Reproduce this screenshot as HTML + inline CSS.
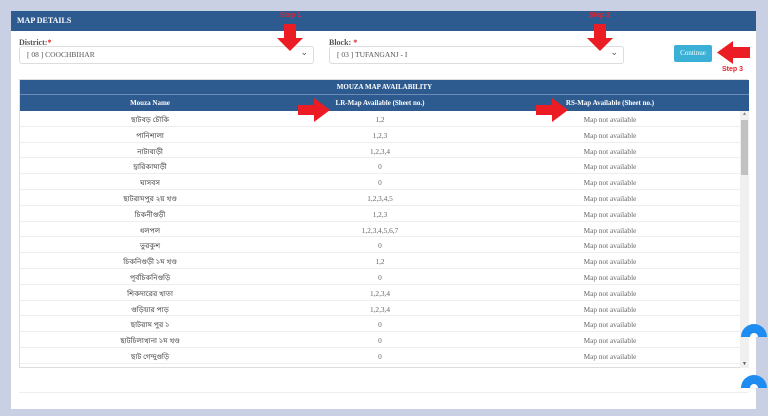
<!DOCTYPE html>
<html><head><meta charset="utf-8"><style>
*{margin:0;padding:0;box-sizing:border-box}
body{width:768px;height:416px;background:#c9d0e4;font-family:"Liberation Serif",serif;position:relative;overflow:hidden}
.panel{position:absolute;left:11px;top:11px;width:745px;height:398px;background:#fff}
.hdr{position:absolute;left:0;top:0;width:745px;height:20px;background:#2e5b8f;color:#fff;font-weight:bold;font-size:8px;line-height:20px;padding-left:6px}
.lbl{position:absolute;font-size:8px;font-weight:bold;color:#555}
.lbl b{color:#e02020}
.sel{position:absolute;height:18px;border:1px solid #ddd;border-radius:3px;font-size:7.5px;color:#555;line-height:16px;padding-left:7px}
.sel:after{content:"⌄";position:absolute;right:5px;top:-3px;font-size:9px;color:#555}
.btn{position:absolute;left:663px;top:34px;width:38px;height:17px;background:#3ab0d6;border-radius:2px;color:#fff;font-size:7px;text-align:center;line-height:17px}
.step{position:absolute;color:#e8202a;font-size:7px;font-weight:bold;font-family:"Liberation Sans",sans-serif}
.t{position:absolute;left:8px;top:68px;width:729px;height:289px;border:1px solid #ddd}
.th1{position:absolute;left:0;top:0;width:729px;height:15px;background:#2e5b8f;color:#fff;font-weight:bold;font-size:7px;text-align:center;line-height:15px;border-bottom:1px solid #6d8bb5}
.th2{position:absolute;left:0;top:15px;width:729px;height:16px;background:#2e5b8f;color:#fff;font-weight:bold;font-size:7px;line-height:16px}
.c{position:absolute;text-align:center}
.c1{left:0;width:260px}.c2{left:260px;width:200px}.c3{left:460px;width:260px}
.row{position:absolute;left:0;width:720px;height:15.8px;border-bottom:1px solid #eee;font-size:7.3px;line-height:17px;color:#666}
.row .c1{font-family:"Liberation Serif","Noto Sans Bengali","Lohit Bengali",serif;color:#555}
.sb{position:absolute;left:720px;top:31px;width:9px;height:257px;background:#f0f0f0}
.thumb{position:absolute;left:1px;top:9px;width:7px;height:55px;background:#c1c1c1}
.half{position:absolute;width:26px;height:13px;background:#1e8cf0;border-radius:13px 13px 0 0}
.half:after{content:"";position:absolute;left:9px;top:9px;width:8px;height:4px;background:#fff;border-radius:4px 4px 0 0}
</style></head><body>
<div class="panel">
<div class="hdr">MAP DETAILS</div>
<div class="lbl" style="left:8px;top:27px">District:<b>*</b></div>
<div class="sel" style="left:8px;top:35px;width:295px">[ 08 ] COOCHBIHAR</div>
<div class="lbl" style="left:318px;top:27px">Block: <b>*</b></div>
<div class="sel" style="left:318px;top:35px;width:295px">[ 03 ] TUFANGANJ - I</div>
<div class="btn">Continue</div>
<div class="t">
<div class="th1">MOUZA MAP AVAILABILITY</div>
<div class="th2"><div class="c c1">Mouza Name</div><div class="c c2">LR-Map Available (Sheet no.)</div><div class="c c3">RS-Map Available (Sheet no.)</div></div>
<div id="rows"></div>
<div class="sb"><div style="position:absolute;left:2px;top:1px;font-size:5px;color:#888">▲</div><div class="thumb"></div><div style="position:absolute;left:2px;bottom:1px;font-size:5px;color:#555">▼</div></div>
</div>
<div style="position:absolute;left:8px;top:381px;width:729px;border-top:1px solid #eee"></div>
</div>
<div class="step" style="left:280px;top:12px">Step 1</div>
<div class="step" style="left:589px;top:12px">Step 2</div>
<div class="step" style="left:722px;top:66px">Step 3</div>
<svg width="768" height="416" style="position:absolute;left:0;top:0">
<g fill="#ec1c24">
<polygon points="284,24 296,24 296,38 303,38 290,51 277,38 284,38"/>
<polygon points="594,24 606,24 606,38 613,38 600,51 587,38 594,38"/>
<polygon points="750,47 750,58 733,58 733,64 717,52.5 733,41 733,47"/>
<polygon points="298,105 314,105 314,98 330,110 314,122 314,115 298,115"/>
<polygon points="536,105 552,105 552,98 568,110 552,122 552,115 536,115"/>
</g></svg>
<div class="half" style="left:741px;top:324px"></div>
<div class="half" style="left:741px;top:375px"></div>
<script>
var n=["ছাটবড় চৌকি","পানিশালা","নাটাবাড়ী","দ্বারিকামাড়ী","ঘাসবস","ছাটরামপুর ২য় খণ্ড","চিকনীগুড়ী","ধলপল","ভুরকুশ","চিকনিগুড়ী ১ম খণ্ড","পূর্বচিকনিগুড়ি","শিকদারের খাতা","গুড়িয়ার পাড়","ছাটরাম পুর ১","ছাটচিলাখানা ১ম খণ্ড","ছাট গেন্দুগুড়ি"];
var v=["1,2","1,2,3","1,2,3,4","0","0","1,2,3,4,5","1,2,3","1,2,3,4,5,6,7","0","1,2","0","1,2,3,4","1,2,3,4","0","0","0"];
var h="";for(var i=0;i<16;i++){h+='<div class="row" style="top:'+(31+i*15.8)+'px"><div class="c c1">'+n[i]+'</div><div class="c c2">'+v[i]+'</div><div class="c c3">Map not available</div></div>';}
document.getElementById("rows").innerHTML=h;
</script>
</body></html>
